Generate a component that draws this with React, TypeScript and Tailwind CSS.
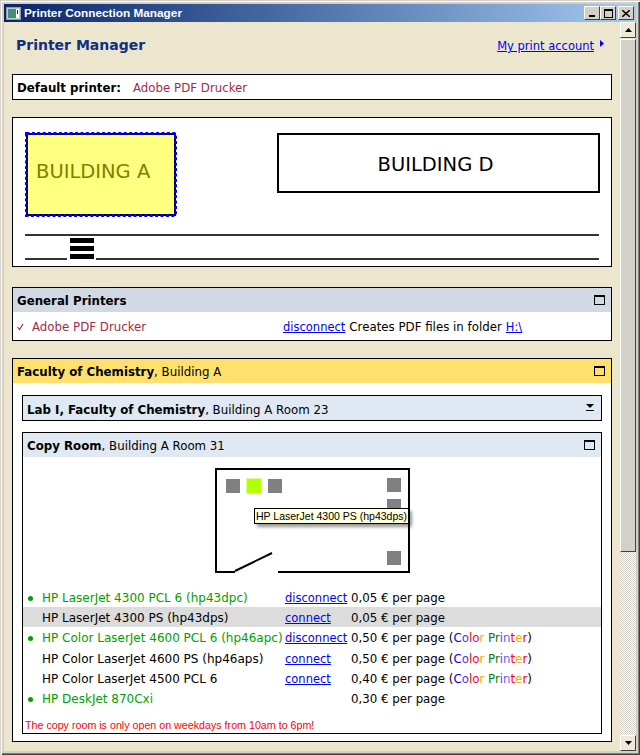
import type { ReactNode } from "react";

const Link = ({ children }: { children: ReactNode }) => (
  <a className="text-[#0000ff] underline cursor-pointer text-[11.5px]">{children}</a>
);

const MaxIcon = () => (
  <span className="self-start mt-[5px] w-[11px] h-[10px] border border-black border-t-2 box-border" />
);

const ColorPrinter = () => (
  <span>
    (<span className="text-[#0000ff]">C</span>
    <span className="text-[#3a3aff]">o</span>
    <span className="text-[#ff0000]">l</span>
    <span className="text-[#ff0033]">o</span>
    <span className="text-[#ffa500]">r</span>{" "}
    <span className="text-[#008000]">P</span>
    <span className="text-[#008000]">r</span>
    <span className="text-[#8a2be2]">i</span>
    <span className="text-[#6a5cff]">n</span>
    <span className="text-[#ff0000]">t</span>
    <span className="text-[#ffa500]">e</span>
    <span className="text-[#ff0000]">r</span>)
  </span>
);

type Printer = {
  name: string;
  action?: string;
  price: string;
  on?: boolean;
  color?: boolean;
  hover?: boolean;
  tall?: boolean;
};

const printers: Printer[] = [
  { name: "HP LaserJet 4300 PCL 6 (hp43dpc)", action: "disconnect", price: "0,05", on: true },
  { name: "HP LaserJet 4300 PS (hp43dps)", action: "connect", price: "0,05", hover: true },
  { name: "HP Color LaserJet 4600 PCL 6 (hp46apc)", action: "disconnect", price: "0,50", on: true, color: true, tall: true },
  { name: "HP Color LaserJet 4600 PS (hp46aps)", action: "connect", price: "0,50", color: true },
  { name: "HP Color LaserJet 4500 PCL 6", action: "connect", price: "0,40", color: true },
  { name: "HP DeskJet 870Cxi", price: "0,30", on: true },
];

const Seat = ({ active }: { active?: boolean }) => (
  <div className={`w-[14px] h-[14px] ${active ? "bg-[#b4ff00] outline outline-1 outline-[#dcff90]" : "bg-[#808080]"}`} />
);

const WinButton = ({ children }: { children: ReactNode }) => (
  <div className="w-4 h-[14px] bg-[#d4d0c8] border border-t-white border-l-white border-r-[#404040] border-b-[#404040] flex items-center justify-center">
    {children}
  </div>
);

const ScrollButton = ({ children }: { children: ReactNode }) => (
  <div className="w-[16px] h-[16px] shrink-0 bg-[#ece9d8] border border-t-white border-l-white border-r-[#404040] border-b-[#404040] flex items-center justify-center">
    {children}
  </div>
);

export default function App() {
  return (
    <div className="w-[640px] h-[755px] bg-[#d4d0c8] p-[4px] box-border flex flex-col overflow-hidden shadow-[inset_1px_1px_0_#d4d0c8,inset_2px_2px_0_#ffffff,inset_-1px_-1px_0_#404040,inset_-2px_-2px_0_#808080] text-[11.8px] leading-[15px] text-black font-['DejaVu_Sans',sans-serif]">
      <div className="h-[18px] shrink-0 flex items-center bg-gradient-to-r from-[#0a246a] to-[#a6caf0] pl-[2px] pr-[2px]">
        <svg width="15" height="13" viewBox="0 0 15 13" className="mr-[3px] shrink-0">
          <rect x="0.5" y="0.5" width="14" height="12" fill="#c8c8c8" stroke="#9a9a9a" />
          <rect x="2" y="2" width="8" height="9" fill="#3f8f7f" />
          <rect x="10" y="2" width="3" height="9" fill="#ffffff" />
          <rect x="11" y="3" width="1" height="4" fill="#222222" />
        </svg>
        <span className="text-white font-bold text-[11.8px] font-['Liberation_Sans',sans-serif]">Printer Connection Manager</span>
        <div className="ml-auto flex">
          <WinButton><span className="w-[6px] h-[2px] bg-black mt-[6px]" /></WinButton>
          <WinButton><span className="w-[9px] h-[9px] border border-black border-t-2 box-border" /></WinButton>
          <div className="ml-[2px]">
            <WinButton>
              <svg width="8" height="7" viewBox="0 0 8 7"><path d="M0 0L8 7M8 0L0 7" stroke="#000" strokeWidth="1.4" /></svg>
            </WinButton>
          </div>
        </div>
      </div>
      <div className="flex-1 flex min-h-0 bg-[#ece6cf]">
        <main className="flex-1 min-w-0 px-2">
          <header className="h-[52px] flex items-start justify-between pl-1 pr-[8px] pt-[11px]">
            <h1 className="text-[#0f2f80] font-bold text-[14px] leading-[24px]">Printer Manager</h1>
            <div className="flex items-start pt-[6px]">
              <Link>My print account</Link>
              <svg width="4" height="7" viewBox="0 0 4 7" className="ml-[6px] mt-[1px]"><path d="M0 0L4 3.5L0 7Z" fill="#0000ff" /></svg>
            </div>
          </header>
          <section className="h-[26px] border border-black bg-white flex items-center pl-1 pt-[2px]">
            <b className="w-[116px]">Default printer:</b>
            <span className="text-[#a52a4a]">Adobe PDF Drucker</span>
          </section>
          <section className="mt-[17px] h-[150px] border border-black bg-white px-3 pt-[15px] flex flex-col">
            <div className="flex items-start justify-between -mr-px">
              <div className="relative ml-px w-[150px] h-[83px] bg-[#ffff80] border-2 border-black flex items-center pl-[8px] pb-[6px] text-[#808000] text-[19.5px]">
                BUILDING A
                <svg width="150" height="83" viewBox="0 0 150 83" className="absolute -left-[2px] -top-[2px] overflow-visible">
                  <rect x="0.5" y="0.5" width="149" height="82" fill="none" stroke="#0000ff" strokeWidth="3" strokeDasharray="3 2.4" />
                </svg>
              </div>
              <div className="w-[323px] h-[60px] border-2 border-black flex items-center justify-center pr-[6px] pt-[2px] text-[19.5px]">
                BUILDING D
              </div>
            </div>
            <div className="mt-[18px] h-[2px] bg-[#333]" />
            <div className="flex items-end h-[24px]">
              <div className="w-[42px] h-[2px] bg-[#333]" />
              <div className="w-[24px] ml-[3px] mr-[2px] mb-px flex flex-col gap-[3px]">
                <div className="h-[5px] bg-black" />
                <div className="h-[5px] bg-black" />
                <div className="h-[5px] bg-black" />
              </div>
              <div className="flex-1 h-[2px] bg-[#333]" />
            </div>
          </section>
          <section className="mt-[20px] border border-black bg-white">
            <div className="h-6 bg-[#d0d9e4] flex items-center justify-between pl-1 pr-[6px] pt-[2px]">
              <b>General Printers</b>
              <MaxIcon />
            </div>
            <div className="h-[28px] flex items-center pl-1 pt-[2px]">
              <svg width="15" height="8" viewBox="0 0 15 8" className="shrink-0">
                <path d="M0.5 4L2.5 6.5L6 1" fill="none" stroke="#a52a4a" strokeWidth="1.2" />
              </svg>
              <span className="w-[251px] shrink-0 text-[#a52a4a]">Adobe PDF Drucker</span>
              <Link>disconnect</Link>
              <span className="ml-1">Creates PDF files in folder</span>
              <span className="ml-1"><Link>H:\</Link></span>
            </div>
          </section>
          <section className="mt-[17px] border border-black bg-white">
            <div className="h-6 bg-[#ffe06e] flex items-center justify-between pl-1 pr-[6px] pt-[2px]">
              <span><b>Faculty of Chemistry</b>, Building A</span>
              <MaxIcon />
            </div>
            <div className="px-[9px] pt-[12px] pb-[7px]">
              <div className="h-[26px] border border-black bg-[#dfe8f3] flex items-center justify-between pl-1 pr-[7px] pt-[4px]">
                <span><b>Lab I, Faculty of Chemistry</b>, Building A Room 23</span>
                <svg width="8" height="8" viewBox="0 0 8 8" className="-mt-[4px]"><path d="M0 0H8L4 4Z" fill="#000" /><path d="M0 6.5H8" stroke="#000" /></svg>
              </div>
              <div className="mt-[11px] border border-black">
                <div className="h-6 bg-[#dfe8f3] flex items-center justify-between pl-1 pr-[6px] pt-[2px]">
                  <span><b>Copy Room</b>, Building A Room 31</span>
                  <MaxIcon />
                </div>
                <div className="relative ml-[192px] mt-[11px] w-[195px] h-[105px] border-2 border-black border-b-0 box-border">
                  <div className="absolute left-[9px] top-[9px] flex gap-[7px]"><Seat /><Seat active /><Seat /></div>
                  <div className="absolute right-[7px] top-[8px] flex flex-col gap-[7px]"><Seat /><Seat /></div>
                  <div className="absolute right-[7px] bottom-[8px]"><Seat /></div>
                  <svg width="191" height="40" viewBox="0 0 191 40" className="absolute left-0 bottom-0">
                    <path d="M18 38L55 20" stroke="#000" strokeWidth="2" />
                    <path d="M0 39H18M61 39H191" stroke="#000" strokeWidth="2" />
                  </svg>
                  <div className="absolute left-[37px] top-[38px] h-[16px] whitespace-nowrap bg-[#ffffe1] border border-black px-px text-[10.5px] leading-[14px] font-['Liberation_Sans',sans-serif] shadow-[3px_3px_3px_rgba(0,0,0,0.4)]">
                    HP LaserJet 4300 PS (hp43dps)
                  </div>
                </div>
                <ul className="mt-[14px]">
                  {printers.map((p) => (
                    <li key={p.name} className={`flex items-center pt-[2px] ${p.tall ? "h-[21px]" : "h-5"} ${p.hover ? "bg-[#dcdcdc]" : ""}`}>
                      <span className="w-[19px] pl-[5px] flex items-center shrink-0">
                        {p.on && <span className="w-[5px] h-[5px] rounded-full bg-[#00a000]" />}
                      </span>
                      <span className={`w-[243px] shrink-0 whitespace-nowrap text-[12px] ${p.on ? "text-[#00a000]" : ""}`}>{p.name}</span>
                      <span className="w-[66px] shrink-0">{p.action && <Link>{p.action}</Link>}</span>
                      <span className="whitespace-pre">{p.price} € per page </span>
                      {p.color && <ColorPrinter />}
                    </li>
                  ))}
                </ul>
                <p className="mt-[10px] pl-[2px] pb-[1px] text-[#ff0000] text-[10.7px] leading-[14px] font-['Liberation_Sans',sans-serif]">
                  The copy room is only open on weekdays from 10am to 6pm!
                </p>
              </div>
            </div>
          </section>
        </main>
        <aside className="w-[16px] shrink-0 flex flex-col bg-[repeating-conic-gradient(#ffffff_0_25%,#d4d0c8_0_50%)] bg-[length:2px_2px]">
          <ScrollButton>
            <svg width="7" height="4" viewBox="0 0 7 4"><path d="M0 4L3.5 0L7 4Z" fill="#000" /></svg>
          </ScrollButton>
          <div className="h-[513px] shrink-0 mt-px bg-[#d4d0c8] border border-t-white border-l-white border-r-[#404040] border-b-[#404040]" />
          <div className="flex-1" />
          <ScrollButton>
            <svg width="7" height="4" viewBox="0 0 7 4"><path d="M0 0L3.5 4L7 0Z" fill="#000" /></svg>
          </ScrollButton>
        </aside>
      </div>
    </div>
  );
}
